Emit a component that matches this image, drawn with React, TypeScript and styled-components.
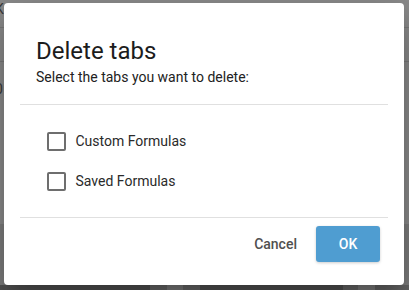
import React from "react";
import styled, { createGlobalStyle } from "styled-components";

const Global = createGlobalStyle`
  html, body { margin: 0; padding: 0; width: 409px; height: 290px; overflow: hidden; }
  body { font-family: Roboto, "Liberation Sans", sans-serif; -webkit-font-smoothing: antialiased; }
  * { box-sizing: border-box; }
`;

const Page = styled.div`
  position: relative;
  width: 409px;
  height: 290px;
  background: #8c8c8c;
  display: flex;
  flex-direction: column;
  overflow: hidden;
`;

const BgRow = styled.div<{ $h: number; $line?: boolean; $bg?: string }>`
  height: ${(p) => p.$h}px;
  flex: none;
  border-bottom: ${(p) => (p.$line ? "1px solid #7b7b7b" : "none")};
  background: ${(p) => p.$bg || "transparent"};
  font-size: 14px;
  color: #3a3a3a;
  padding-top: 2px;
  margin-left: -5px;
  padding-left: 0;
  line-height: 14px;
`;

const BgText = styled.span<{ $top: number }>`
  display: block;
  margin-top: ${(p) => p.$top}px;
`;

const BottomBar = styled.div`
  flex: 1;
  display: flex;
  background: #545454;
`;

const BarPatch = styled.div<{ $w: number; $c: string }>`
  width: ${(p) => p.$w}px;
  flex: none;
  background: ${(p) => p.$c};
`;

const Dialog = styled.div`
  position: absolute;
  top: 3px;
  left: 4px;
  width: 400px;
  height: 282px;
  background: #fff;
  border-radius: 4px;
  box-shadow: 0 11px 15px -7px rgba(0, 0, 0, 0.2), 0 24px 38px 3px rgba(0, 0, 0, 0.14),
    0 9px 46px 8px rgba(0, 0, 0, 0.12);
  display: flex;
  flex-direction: column;
`;

const Header = styled.div`
  padding: 34px 32px 17px;
`;

const Title = styled.h2`
  margin: 0;
  font-size: 24px;
  line-height: 28px;
  font-weight: 400;
  color: #1c1c1c;
`;

const Subtitle = styled.p`
  margin: 2px 0 0;
  font-size: 14px;
  line-height: 20px;
  color: #222;
`;

const Divider = styled.div`
  height: 1px;
  background: #e0e0e0;
  margin: 0 16px;
  flex: none;
`;

const Body = styled.div`
  display: flex;
  flex-direction: column;
  gap: 20px;
  padding: 26px 42px 26px;
`;

const OptionRow = styled.label`
  display: flex;
  align-items: center;
  gap: 10px;
  height: 20px;
  font-size: 14px;
  line-height: 20px;
  color: #2a2a2a;
  cursor: pointer;
`;

const Box = styled.span`
  width: 19px;
  height: 19px;
  border: 2px solid #6e6e6e;
  border-radius: 2px;
  flex: none;
  margin-left: 0.5px;
`;

const Footer = styled.div`
  display: flex;
  justify-content: flex-end;
  align-items: center;
  gap: 11px;
  padding: 8px 24px 0;
`;

const TextButton = styled.button`
  border: none;
  background: transparent;
  font-family: inherit;
  font-size: 14px;
  font-weight: 500;
  color: #505050;
  height: 36px;
  padding: 0 8px;
  cursor: pointer;
`;

const PrimaryButton = styled.button`
  border: none;
  background: #4f9dd1;
  color: #fff;
  font-family: inherit;
  font-size: 14px;
  font-weight: 500;
  width: 64px;
  height: 36px;
  border-radius: 3px;
  box-shadow: 0 1px 3px rgba(0, 0, 0, 0.2);
  cursor: pointer;
`;

export default function App() {
  return (
    <>
      <Global />
      <Page>
        <BgRow $h={28} $line>K</BgRow>
        <BgRow $h={34} $line />
        <BgRow $h={162}>
          <BgText $top={18}>0</BgText>
        </BgRow>
        <BgRow $h={61} $bg="#7e7e7e" />
        <BottomBar>
          <BarPatch $w={150} $c="#545454" />
          <BarPatch $w={17} $c="#6a6a6a" />
          <BarPatch $w={16} $c="#7f7f7f" />
          <BarPatch $w={17} $c="#6a6a6a" />
          <BarPatch $w={143} $c="#545454" />
          <BarPatch $w={15} $c="#6a6a6a" />
          <BarPatch $w={17} $c="#7f7f7f" />
          <BarPatch $w={34} $c="#666" />
        </BottomBar>
        <Dialog role="dialog">
          <Header>
            <Title>Delete tabs</Title>
            <Subtitle>Select the tabs you want to delete:</Subtitle>
          </Header>
          <Divider />
          <Body>
            <OptionRow>
              <Box />
              Custom Formulas
            </OptionRow>
            <OptionRow>
              <Box />
              Saved Formulas
            </OptionRow>
          </Body>
          <Divider />
          <Footer>
            <TextButton>Cancel</TextButton>
            <PrimaryButton>OK</PrimaryButton>
          </Footer>
        </Dialog>
      </Page>
    </>
  );
}
